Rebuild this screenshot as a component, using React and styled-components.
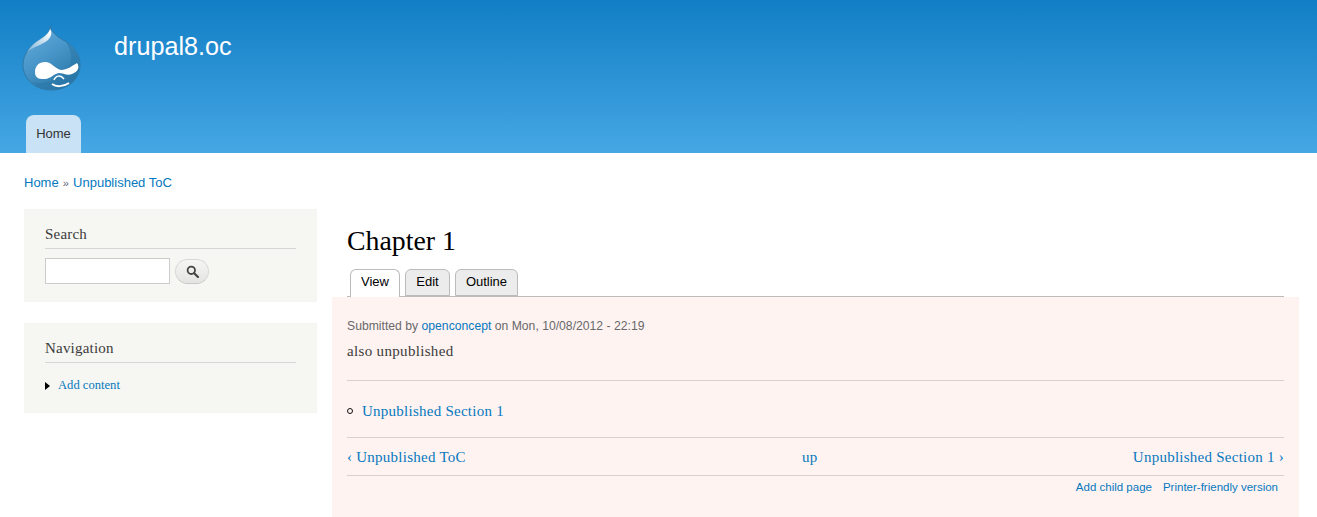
import React from "react";
import styled, { createGlobalStyle } from "styled-components";

const GlobalStyle = createGlobalStyle`
  html, body {
    margin: 0;
    padding: 0;
    height: 100%;
    overflow: hidden;
    background: #fff;
  }
  body {
    font-family: "Liberation Serif", serif;
    color: #3b3b3b;
  }
  * {
    box-sizing: border-box;
  }
  a {
    color: #0678be;
    text-decoration: none;
  }
`;

const Page = styled.div`
  height: 100vh;
  display: flex;
  flex-direction: column;
`;

const Header = styled.header`
  flex: none;
  height: 153px;
  background: linear-gradient(to bottom, #117ec5 0%, #46a7e4 100%);
  display: flex;
  flex-direction: column;
  padding-left: 22px;
`;

const Brand = styled.div`
  display: flex;
  align-items: flex-start;
  height: 115px;
  padding-top: 25px;
`;

const SiteName = styled.a`
  font-family: "Liberation Sans", sans-serif;
  font-size: 25.2px;
  line-height: 42px;
  color: #fffeff;
  margin-left: 32px;
`;

const PrimaryNav = styled.nav`
  display: flex;
  padding-left: 4px;
`;

const NavTab = styled.a`
  width: 55px;
  height: 38px;
  background: #c9e2f5;
  border-radius: 8px 8px 0 0;
  color: #333;
  font-family: "Liberation Sans", sans-serif;
  font-size: 13px;
  line-height: 37px;
  text-align: center;
`;

const Breadcrumb = styled.div`
  flex: none;
  padding: 22px 0 0 24px;
  height: 56px;
  font-family: "Liberation Sans", sans-serif;
  font-size: 13px;
  line-height: 15px;
  color: #3b3b3b;
`;

const Crumb = styled.span`
  font-size: 11px;
  color: #5a6a75;
  margin: 0 0.5px;
`;

const Columns = styled.div`
  flex: 1;
  min-height: 0;
  display: grid;
  grid-template-columns: 293px 967px;
  column-gap: 15px;
  padding-left: 24px;
`;

const Sidebar = styled.aside`
  display: flex;
  flex-direction: column;
  gap: 21px;
`;

const Block = styled.section`
  background: #f6f6f2;
  padding: 15px 20px 0;
  height: ${(p) => p.$height}px;
  border: 1px solid #f5f5f1;
`;

const BlockTitle = styled.h2`
  margin: 0 0 9px;
  padding-bottom: 5px;
  border-bottom: 1px solid #d6d6d6;
  font-size: 15px;
  font-weight: 400;
  line-height: 18px;
  letter-spacing: 0.2px;
  color: #3b3b3b;
`;

const SearchRow = styled.div`
  display: flex;
  align-items: center;
  gap: 5px;
`;

const SearchInput = styled.input`
  width: 125px;
  height: 26px;
  background: #fff;
  border: 1px solid #ccc;
  padding: 0 4px;
  outline: none;
`;

const SearchButton = styled.button`
  width: 34px;
  height: 25px;
  padding: 0;
  border: 1px solid #d8d8d8;
  border-bottom-color: #c8c8c8;
  border-radius: 13px;
  background: linear-gradient(to bottom, #f6f6f4, #e4e4e1);
  display: flex;
  align-items: center;
  justify-content: center;
`;

const MenuList = styled.ul`
  list-style: none;
  margin: 15px 0 0;
  padding: 0;
`;

const MenuItem = styled.li`
  display: flex;
  align-items: center;
  font-size: 12.6px;
  line-height: 15px;
`;

const Arrow = styled.span`
  width: 0;
  height: 0;
  border-style: solid;
  border-width: 4px 0 4px 5px;
  border-color: transparent transparent transparent #000;
  margin-right: 8px;
`;

const Main = styled.main`
  min-width: 0;
  display: flex;
  flex-direction: column;
`;

const TitleArea = styled.div`
  flex: none;
  padding: 0 15px;
`;

const PageTitle = styled.h1`
  margin: 0;
  padding-top: 16px;
  height: 60px;
  font-size: 27.8px;
  font-weight: 400;
  line-height: 32px;
  color: #000;
`;

const Tabs = styled.ul`
  display: flex;
  gap: 5px;
  list-style: none;
  margin: 0;
  padding: 0 0 0 3px;
  height: 28px;
  border-bottom: 1px solid #bbb;
`;

const Tab = styled.li`
  height: ${(p) => (p.$active ? 28 : 27)}px;
  width: ${(p) => p.$width}px;
  border: 1px solid #bbb;
  border-bottom: ${(p) => (p.$active ? "none" : "1px solid #bbb")};
  border-radius: 6px 6px 0 0;
  background: ${(p) => (p.$active ? "#fff" : "#ececec")};
  color: #000;
  font-family: "Liberation Sans", sans-serif;
  font-size: 13px;
  line-height: 24px;
  text-align: center;
`;

const Node = styled.article`
  flex: 1;
  background: #fef3f1;
  padding: 21px 15px 0;
`;

const Submitted = styled.div`
  font-family: "Liberation Sans", sans-serif;
  font-size: 12.2px;
  line-height: 17px;
  color: #68696b;
`;

const Body = styled.p`
  margin: 8px 0 20px;
  font-size: 15px;
  line-height: 17px;
  letter-spacing: 0.33px;
  color: #3b3b3b;
`;

const BookLinks = styled.div`
  border-top: 1px solid #d6d1cf;
  padding-top: 21px;
  height: 57px;
`;

const BookItem = styled.div`
  display: flex;
  align-items: center;
  font-size: 15px;
  line-height: 18px;
  letter-spacing: 0.25px;
`;

const Bullet = styled.span`
  width: 6px;
  height: 6px;
  border: 1.5px solid #111;
  border-radius: 50%;
  margin-right: 9px;
`;

const Pager = styled.div`
  display: grid;
  grid-template-columns: 42% 14.8% 43.2%;
  align-items: center;
  height: 39px;
  padding-top: 1px;
  border-top: 1px solid #d6d1cf;
  border-bottom: 1px solid #d6d1cf;
  font-size: 15px;
  letter-spacing: 0.25px;
`;

const PagerLink = styled.a`
  text-align: ${(p) => p.$align};
`;

const NodeLinks = styled.div`
  display: flex;
  justify-content: flex-end;
  gap: 11px;
  padding: 4px 6px 0 0;
  font-family: "Liberation Sans", sans-serif;
  font-size: 11.5px;
  line-height: 14px;
`;

const DrupalLogo = () => (
  <svg width="60" height="66" viewBox="0 0 60 66" style={{ flex: "none" }}>
    <defs>
      <linearGradient id="drop" x1="0" y1="0" x2="0.6" y2="1">
        <stop offset="0" stopColor="#6cb0dc" />
        <stop offset="0.5" stopColor="#4a97cb" />
        <stop offset="1" stopColor="#2a77a8" />
      </linearGradient>
      <linearGradient id="shine" x1="0.8" y1="0" x2="0" y2="1">
        <stop offset="0" stopColor="#ffffff" />
        <stop offset="1" stopColor="#ffffff" stopOpacity="0.2" />
      </linearGradient>
    </defs>
    <path
      d="M28 1 C28 8 24 11 18 15 C9 20 1 28 1 40 C1 54 13 65 29.500 65 C46 65 58 54 58 40 C58 27 49 19 41 15 C34 11 30 7 28 1 Z"
      fill="url(#drop)"
      stroke="#2f79a8"
      strokeWidth="1"
    />
    <path
      d="M44 17 C52 23 58 31 57 42 C56 54 44 64 29 64 C22 64 15 62 10 57 C22 60 38 56 46 44 C51 36 50 26 44 17 Z"
      fill="#2a77a8"
      opacity="0.55"
    />
    <path
      d="M28 4 C27 9 20 13 14 17 C10 20 7 23 5 27 C11 22 20 20 26 15 C30 11 30 7 28 4 Z"
      fill="url(#shine)"
    />
    <path
      d="M13 47 C13 41 17 37 23 37 C30 37 33 44 39 45 C45 45 50 41 55 38 C58 42 56 47 50 49 C45 51 41 48 37 48 C31 49 28 55 20 54 C15 54 13 51 13 47 Z"
      fill="#fff"
    />
    <path d="M32 55 C34 50 39 50 42 54" fill="none" stroke="#fff" strokeWidth="1.500" />
    <path d="M30 59 C34 62 41 62 47 58" fill="none" stroke="#fff" strokeWidth="2" />
  </svg>
);

const SearchIcon = () => (
  <svg width="13" height="13" viewBox="0 0 13 13">
    <circle cx="5.300" cy="5.300" r="3.700" fill="none" stroke="#444" strokeWidth="1.800" />
    <path d="M8.200 8.200 L12 12" stroke="#444" strokeWidth="2.200" strokeLinecap="round" />
  </svg>
);

const App = () => {
  return (
    <Page>
      <GlobalStyle />
      <Header>
        <Brand>
          <DrupalLogo />
          <SiteName href="#">drupal8.oc</SiteName>
        </Brand>
        <PrimaryNav>
          <NavTab href="#">Home</NavTab>
        </PrimaryNav>
      </Header>
      <Breadcrumb>
        <a href="#">Home</a> <Crumb>»</Crumb> <a href="#">Unpublished ToC</a>
      </Breadcrumb>
      <Columns>
        <Sidebar>
          <Block $height={93}>
            <BlockTitle>Search</BlockTitle>
            <SearchRow>
              <SearchInput type="text" />
              <SearchButton aria-label="Search">
                <SearchIcon />
              </SearchButton>
            </SearchRow>
          </Block>
          <Block $height={90}>
            <BlockTitle>Navigation</BlockTitle>
            <MenuList>
              <MenuItem>
                <Arrow />
                <a href="#">Add content</a>
              </MenuItem>
            </MenuList>
          </Block>
        </Sidebar>
        <Main>
          <TitleArea>
            <PageTitle>Chapter 1</PageTitle>
            <Tabs>
              <Tab $active $width={50}>View</Tab>
              <Tab $width={45}>Edit</Tab>
              <Tab $width={63}>Outline</Tab>
            </Tabs>
          </TitleArea>
          <Node>
            <Submitted>
              Submitted by <a href="#">openconcept</a> on Mon, 10/08/2012 - 22:19
            </Submitted>
            <Body>also unpublished</Body>
            <BookLinks>
              <BookItem>
                <Bullet />
                <a href="#">Unpublished Section 1</a>
              </BookItem>
            </BookLinks>
            <Pager>
              <PagerLink href="#" $align="left">‹ Unpublished ToC</PagerLink>
              <PagerLink href="#" $align="center">up</PagerLink>
              <PagerLink href="#" $align="right">Unpublished Section 1 ›</PagerLink>
            </Pager>
            <NodeLinks>
              <a href="#">Add child page</a>
              <a href="#">Printer-friendly version</a>
            </NodeLinks>
          </Node>
        </Main>
      </Columns>
    </Page>
  );
};

export default App;
